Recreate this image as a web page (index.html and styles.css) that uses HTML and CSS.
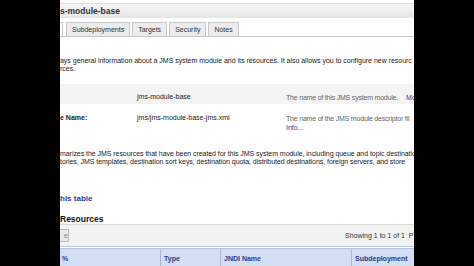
FILE: index.html
```html
<!DOCTYPE html>
<html>
<head>
    <meta charset="UTF-8">
    <title>jms-module-base</title>
    <link rel="stylesheet" href="styles.css">
</head>
<body>
    <div class="frame">
        <div class="side"></div>
        <div class="page">
            <div class="title-bar">s-module-base</div>

            <div class="tabs">
                <div class="tab active"></div>
                <div class="tab">Subdeployments</div>
                <div class="tab">Targets</div>
                <div class="tab">Security</div>
                <div class="tab">Notes</div>
            </div>

            <p class="intro">ays general information about a JMS system module and its resources. It also allows you to configure new resourc<br>rces.</p>

            <div class="props">
                <div class="prop shaded">
                    <div class="prop-label"></div>
                    <div class="prop-value">jms-module-base</div>
                    <div class="prop-help">The name of this JMS system module.<a href="#">Mo</a></div>
                </div>
                <div class="prop">
                    <div class="prop-label">e Name:</div>
                    <div class="prop-value">jms/jms-module-base-jms.xml</div>
                    <div class="prop-help">The name of the JMS module descriptor fil<br><a href="#">Info...</a></div>
                </div>
            </div>

            <p class="summary">marizes the JMS resources that have been created for this JMS system module, including queue and topic destinatio<br>tories, JMS templates, destination sort keys, destination quota, distributed destinations, foreign servers, and store</p>

            <a class="customize" href="#">his table</a>

            <h3 class="section">Resources</h3>

            <div class="toolbar">
                <span class="tool-btn">e</span>
                <span class="paging">Showing 1 to 1 of 1 &nbsp;P</span>
            </div>

            <div class="grid-head">
                <div class="col col-name">%</div>
                <div class="col col-type">Type</div>
                <div class="col col-jndi">JNDI Name</div>
                <div class="col col-sub">Subdeployment</div>
            </div>
        </div>
        <div class="side"></div>
    </div>
</body>
</html>
```

FILE: styles.css
```css
body {
    margin: 0;
    background: #000;
    font-family: "Liberation Sans", Arial, sans-serif;
    font-size: 7px;
    color: #222;
}
.frame {
    display: flex;
    height: 266px;
    overflow: hidden;
}
.side {
    width: 60px;
    flex: none;
    background: #000;
}
.page {
    width: 354px;
    flex: none;
    background: #fff;
    overflow: hidden;
    padding-top: 3px;
    white-space: nowrap;
}
a {
    color: #2b3d9c;
    text-decoration: none;
}
.title-bar {
    height: 14px;
    line-height: 14px;
    border-top: 1px solid #dedede;
    background: linear-gradient(#f6f6f6, #e6e6e6);
    font-weight: bold;
    font-size: 8.5px;
    color: #333;
}
.tabs {
    display: flex;
    gap: 2px;
    margin-top: 4px;
    height: 14px;
    border-bottom: 1px solid #c8c8c8;
}
.tab {
    flex: none;
    line-height: 13px;
    padding: 0 5px;
    border: 1px solid #c8c8c8;
    border-bottom: none;
    background: #ececec;
    color: #333;
}
.tab.active {
    width: 2px;
    padding: 0;
    border-left: none;
    background: #fff;
    margin-right: 1px;
}
.intro {
    margin: 20px 0 0;
    line-height: 8px;
    letter-spacing: -0.02px;
}
.props {
    margin-top: 11px;
}
.prop {
    display: flex;
    height: 28px;
    padding-top: 10px;
    box-sizing: border-box;
}
.prop.shaded {
    height: 20px;
    padding-top: 9px;
    background: #f4f4f4;
}
.prop-label {
    flex: none;
    width: 77px;
    font-weight: bold;
}
.prop-value {
    flex: none;
    width: 149px;
}
.prop-help {
    color: #666;
    line-height: 9px;
    letter-spacing: -0.2px;
}
.prop-help a {
    margin-left: 8px;
    letter-spacing: 0;
}
.prop-help br + a {
    margin-left: 0;
}
.summary {
    margin: 18px 0 0;
    line-height: 8px;
    letter-spacing: -0.05px;
}
.customize {
    display: block;
    margin-top: 28px;
    font-weight: bold;
    font-size: 8px;
}
.section {
    margin: 11px 0 0;
    font-size: 8.5px;
    color: #111;
}
.toolbar {
    display: flex;
    align-items: center;
    justify-content: space-between;
    height: 21px;
    margin-top: 0;
    border-top: 1px solid #d8d8d8;
    border-bottom: 1px solid #b9c4d6;
    background: #f2f2f2;
}
.tool-btn {
    width: 8px;
    height: 11px;
    line-height: 11px;
    border: 1px solid #b8b8b8;
    border-left: none;
    background: #e8e8e8;
    color: #888;
    text-align: right;
}
.paging {
    width: 69px;
    color: #333;
}
.grid-head {
    display: flex;
    height: 22px;
    margin-top: 1px;
    background: #d2def2;
    border-top: 1px solid #b3c1dc;
}
.col {
    flex: none;
    line-height: 20px;
    padding-left: 3px;
    border-right: 1px solid #a9b7d0;
    font-weight: bold;
    color: #2d3a8c;
}
.col-name {
    width: 98px;
    padding-left: 2px;
}
.col-type {
    width: 56px;
}
.col-jndi {
    width: 127px;
}
.col-sub {
    border-right: none;
}
```
